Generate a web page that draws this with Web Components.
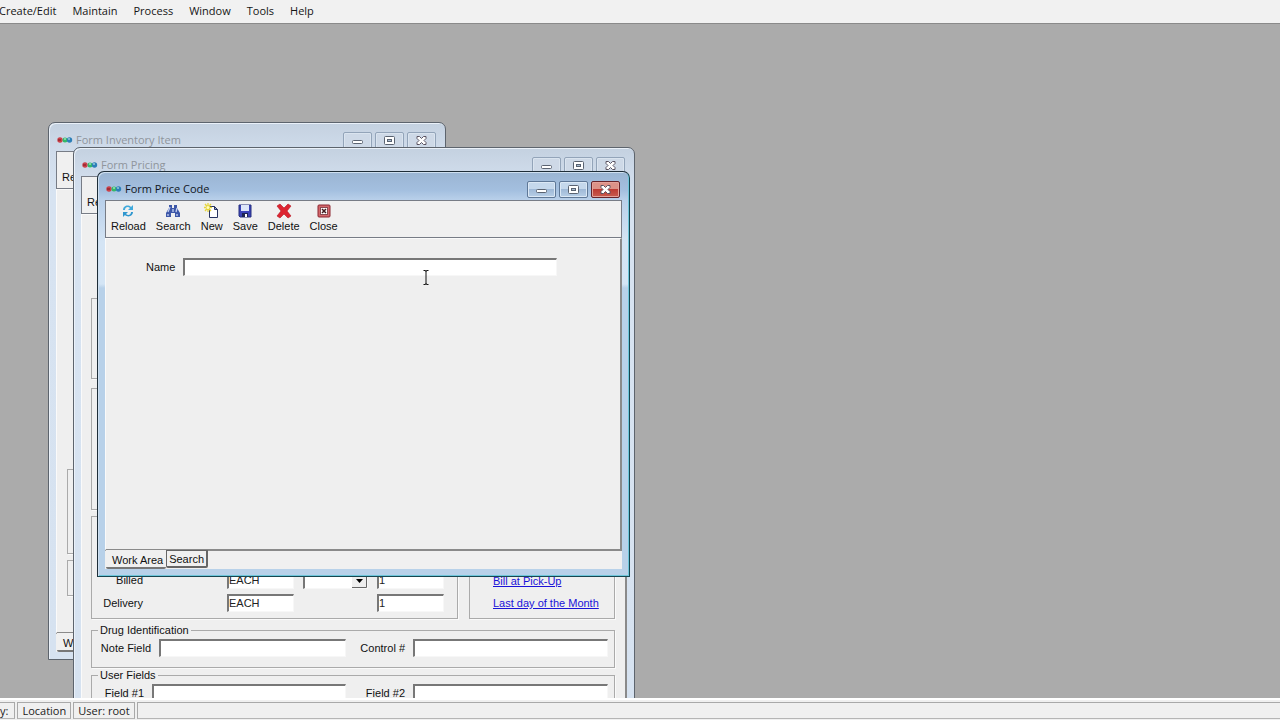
<!DOCTYPE html>
<html lang="en">
<head>
<meta charset="utf-8">
<title>Form Price Code</title>
<style>
html,body{margin:0;height:100%}
body{font:11px/14px "Liberation Sans",Arial,sans-serif;color:#111;overflow:hidden}
</style>
</head>
<body>
<app-shell></app-shell>

<script>
function define(name, html, setup) {
  const t = document.createElement('template');
  t.innerHTML = html;
  customElements.define(name, class extends HTMLElement {
    constructor() {
      super();
      this.attachShadow({mode: 'open'}).append(t.content.cloneNode(true));
    }
    connectedCallback() { if (setup) setup(this, this.shadowRoot); }
  });
}

const icons = {
  reload: '<path d="M3 7C3 3 8 1 11 4l2-2v5H8l2-2C8 3 5 4 5 7z" fill="#3fa9dc"/><path d="M13 9c0 4-5 6-8 3l-2 2V9h5l-2 2c2 2 5 1 5-2z" fill="#2f97cf"/>',
  search: '<path d="M4 2h3v3h2V2h3v3l3 5v4h-5v-4H6v4H1v-4l3-5z" fill="#3d57a8"/><path d="M3 9l2-5M11 9l1-4M3 11v2M12 11v2M8 6v3" stroke="#c3d0f2" stroke-width="1.3"/>',
  new: '<path d="M5.500 3.500h5l3 3v8h-8z" fill="#fff" stroke="#27335f"/><path d="M10.500 3.500v3h3z" fill="#8fa6de" stroke="#27335f"/><path d="M4 0v9M0 4.500h8M1 1l6 7M7 1L1 8" stroke="#e6d63a" stroke-width="1.300"/><circle cx="4" cy="4.500" r="1.500" fill="#fffcc0"/>',
  save: '<path d="M2 2h12v12H3l-1-1z" fill="#3b43b8" stroke="#26307f"/><path d="M4 2h8v6H4z" fill="#dfe7fa"/><path d="M5 10h6v4H5z" fill="#1d2452"/><path d="M8 11h2v3H8z" fill="#fff"/>',
  delete: '<path d="M1 3l3-2 4 4 4-4 3 2-4 5 4 5-3 2-4-4-4 4-3-2 4-5z" fill="#dd2430" stroke="#b51521" stroke-width=".6"/>',
  close: '<rect x="2" y="2" width="12" height="12" rx="1" fill="#d4686c" stroke="#8c2630"/><rect x="4.500" y="4.500" width="7" height="7" fill="#fff" stroke="#8a4a50"/><path d="M6 6l4 4M10 6l-4 4" stroke="#40191c" stroke-width="1.500"/>'
};

define('tool-button', `<style>
:host{display:block}
button{display:flex;flex-direction:column;align-items:center;border:0;background:none;padding:0 4px;margin:0;font:inherit;color:#111}
svg{width:16px;height:16px;display:block}
span{line-height:14px}
</style><button type="button"><svg viewBox="0 0 16 16" fill="none"></svg><span><slot></slot></span></button>`,
(el, r) => { r.querySelector('svg').innerHTML = icons[el.getAttribute('icon')]; });

define('menu-bar', `<style>
:host{display:block;background:#f1f1f1;border-bottom:1px solid #8a8a8a;height:23px;box-sizing:content-box}
nav{display:flex;gap:16px;margin-left:-1px;height:22px;align-items:center;font:11px/16px "Open Sans","Noto Sans",sans-serif}
button{font:inherit;border:0;background:none;padding:0;color:#151515}
</style><nav aria-label="Main menu"><button>Create/Edit</button><button>Maintain</button><button>Process</button><button>Window</button><button>Tools</button><button>Help</button></nav>`);

define('status-bar', `<style>
:host{display:flex;height:22px;box-sizing:border-box;padding:2px 0 1px;gap:2px;background:#f0f0f0;border-top:2px solid #fff;font:11px/15px "Open Sans","Noto Sans",sans-serif;color:#222}
div{border:1px solid #a9a9a9;border-bottom-color:#b5b5b5;padding:0 4px;white-space:nowrap;box-sizing:border-box;height:17px}
div:first-of-type{border-left:0;padding:0 6px 0 0}
div:last-of-type{flex:1;border-right:0}
</style><div>y:</div><div>Location</div><div>User: root</div><div></div>`);

define('text-field', `<style>
:host{display:flex;align-items:center;justify-content:flex-end}
label{white-space:nowrap;margin-right:8px}
input{font:inherit;width:var(--w,187px);height:18px;box-sizing:border-box;margin:0;padding:0 0 2px;border:1px solid #f7f7f7;border-top:2px solid #777;border-left:2px solid #777;border-radius:0;background:#fff;color:#222;outline:0}
</style><label for="f"></label><input id="f" type="text">`,
(el, r) => {
  const l = r.querySelector('label'), i = r.querySelector('input');
  const name = el.getAttribute('label') || '';
  if (name) l.textContent = name; else { l.remove(); i.setAttribute('aria-label', el.getAttribute('hint')); }
  i.value = el.getAttribute('value') || '';
});

define('drop-down', `<style>
:host{display:block;position:relative}
select{appearance:none;display:block;width:65px;height:18px;margin:0;padding:0;border:1px solid #f7f7f7;border-top:2px solid #777;border-left:2px solid #777;border-radius:0;background:#fff;font:inherit}
svg{position:absolute;right:1px;top:2px;width:15px;height:15px;pointer-events:none}
</style><select aria-label="Unit"><option></option></select><svg viewBox="0 0 15 15"><path d="M0 0h15v15H0z" fill="#eee"/><path d="M0 14.500h14.500V0" fill="none" stroke="#666"/><path d="M4 6h7l-3.500 4z" fill="#000"/></svg>`);

define('group-box', `<style>
:host{display:block}
fieldset{box-sizing:border-box;height:100%;min-width:0;margin:0;padding:0;border:1px solid #aaa;box-shadow:1px 1px 0 #fafafa}
legend{margin-left:6px;padding:0 2px;line-height:14px}
</style><fieldset><legend></legend><slot></slot></fieldset>`,
(el, r) => {
  const l = r.querySelector('legend');
  if (el.hasAttribute('label')) l.textContent = el.getAttribute('label'); else l.remove();
});

define('mdi-window', `<style>
:host{position:absolute;display:flex;flex-direction:column;box-sizing:border-box;border:1px solid #5d646d;border-radius:7px 7px 0 0;padding:0 7px 7px;
 background:linear-gradient(#c4d1e0,#d0dceb 28px,#d7e3f1 70px,#d6e2f0);box-shadow:inset 1px 1px 0 #eaf1f9}
:host([active]){border-color:#1e2d38;border-right-color:#174550;border-bottom-color:#174550;background:linear-gradient(#9ab5d3,#a3bfdf 18px,#b9d0ea 28px,#d4e4f4 70px,#d4e5f5 112px,#b8d1e9 116px,#b8d1e9);
 box-shadow:inset 1px 1px 0 #cfe0f0,inset -1px -1px 0 #6ec6da}
header{flex:none;display:flex;align-items:center;height:28px;padding:6px 0 0 1px;box-sizing:border-box;font:11px/16px "Open Sans","Noto Sans",sans-serif;color:#8f959c}
:host([active]) header{color:#10151c}
.logo{width:16px;height:8px;margin-right:3px}
h2{font:inherit;margin:0;flex:1;white-space:nowrap}
.ctl{display:flex;gap:3px;padding-right:2px}
.ctl button{width:29px;height:17px;padding:0;border:1px solid #93a4b9;border-radius:2px;background:#ced9e7;box-shadow:inset 0 0 0 1px #dae4ef;display:flex;align-items:center;justify-content:center}
:host([active]) .ctl button{border-color:#5f7897;background:linear-gradient(#c5d8ec 45%,#9fb9d7 50%,#b8cfe7);box-shadow:inset 0 0 0 1px #dbe8f5}
:host([active]) .ctl button:last-child{border-color:#66232a;background:linear-gradient(#dc9288 45%,#bd3b33 50%,#c85c50);box-shadow:inset 0 0 0 1px #e4a29a}
.ctl svg{width:13px;height:11px}
.tools{flex:none;display:flex;gap:2px;height:38px;box-sizing:border-box;border:1px solid #777c86;background:#f0f0f0;padding:2px 0 0 1px}
main{flex:1;min-height:0;box-sizing:border-box;background:#efefef;border:1px solid #fafafa;border-right:2px solid #8a8a8a;border-bottom:2px solid #8a8a8a}
footer{flex:none;display:flex;align-items:flex-start;height:18px;background:#f0f0f0;padding-left:1px}
footer button{font:inherit;line-height:14px;color:#111;background:#f0f0f0;margin:-1px 0 0;border:0;box-sizing:border-box;white-space:nowrap;border-radius:0 0 2px 2px}
footer .on{height:19px;padding:3px 3px 0 6px;border-bottom:2px solid #777}
footer .off{height:18px;padding:1px 2px;border:1px solid #666;border-right-width:2px;border-bottom-width:2px}
</style>
<header><svg class="logo" viewBox="0 0 16 8"><circle cx="3" cy="4" r="2.700" fill="#cb4149"/><circle cx="8" cy="4" r="2.500" fill="#35b968"/><circle cx="12.500" cy="4" r="2.700" fill="#2c7fb8"/><path d="M7 3h2M12 2v2" stroke="#c9f3e6"/><path d="M1 4h3" stroke="#7d1a25"/></svg><h2></h2>
<div class="ctl">
<button aria-label="Minimize"><svg viewBox="0 0 13 11"><rect x="1.500" y="5.500" width="10" height="3" rx="1" fill="#fff" stroke="#5a6371"/></svg></button>
<button aria-label="Maximize"><svg viewBox="0 0 13 11"><rect x="1.500" y="1.500" width="10" height="8" rx="1" fill="#fff" stroke="#5a6371"/><rect x="4.500" y="4.500" width="4" height="2" fill="#a9bdd3" stroke="#5a6371"/></svg></button>
<button aria-label="Close window"><svg viewBox="0 0 13 11"><path d="M2 1.500h2.500l2 2 2-2H11v2l-2 2 2 2v2H8.500l-2-2-2 2H2v-2l2-2-2-2z" fill="#fff" stroke="#5a5361"/></svg></button>
</div></header>
<div class="tools"><slot name="tools"></slot></div>
<main><slot></slot></main>
<footer><button class="on">Work Area</button></footer>`,
(el, r) => {
  r.querySelector('h2').textContent = el.getAttribute('heading');
  if (el.hasAttribute('active')) {
    const b = document.createElement('button');
    b.className = 'off';
    b.textContent = 'Search';
    r.querySelector('footer').append(b);
  }
});

define('pricing-form', `<style>
:host{display:block;padding:83px 10px 0 9px}
.top{display:grid;grid-template-columns:367px 1fr;column-gap:11px}
.a{height:81px;margin-bottom:9px}
.b{height:122px;margin-bottom:6px}
.c,.d{height:103px}
.units{display:grid;grid-template-columns:41px 142px 65px 67px;column-gap:9px;padding:54px 0 0 10px;row-gap:5px;align-items:center}
.units span{text-align:right}
.units text-field{--w:67px}
.links{display:flex;flex-direction:column;gap:8px;padding:57px 0 0 23px}
a{color:#1a12d8;text-decoration:underline}
.wide{margin-top:4px;height:45px}
.user{margin-top:0}
.row{display:grid;grid-template-columns:254px 1fr;padding:2px 6px 0 0}
.row text-field:first-child{--w:187px}
.user text-field:first-child{--w:194px}
.row text-field:last-child{--w:195px}
</style>
<div class="top"><group-box class="a"></group-box><i></i><group-box class="b"></group-box><i></i>
<group-box class="c"><div class="units">
<span>Billed</span><text-field hint="Billed unit" value="EACH"></text-field><drop-down></drop-down><text-field hint="Billed quantity" value="1"></text-field>
<span>Delivery</span><text-field hint="Delivery unit" value="EACH"></text-field><span></span><text-field hint="Delivery quantity" value="1"></text-field>
</div></group-box>
<group-box class="d"><div class="links"><a href="#pickup">Bill at Pick-Up</a><a href="#month">Last day of the Month</a></div></group-box></div>
<group-box class="wide" label="Drug Identification"><div class="row"><text-field label="Note Field"></text-field><text-field label="Control #"></text-field></div></group-box>
<group-box class="wide user" label="User Fields"><div class="row"><text-field label="Field #1"></text-field><text-field label="Field #2"></text-field></div></group-box>`);

define('inventory-form', `<style>
:host{display:block;padding:279px 10px 0}
.a{height:85px;margin-bottom:6px}.b{height:36px}
</style><group-box class="a"></group-box><group-box class="b"></group-box>`);

define('app-shell', `<style>
:host{display:flex;flex-direction:column;height:100vh}
.desk{flex:1;min-height:0;position:relative;overflow:hidden;background:#ababab}
.w1{left:48px;top:98px;width:398px;height:538px}
.w2{left:73px;top:123px;width:562px;height:600px}
.w3{left:97px;top:147px;width:533px;height:406px}
.name{display:flex;padding:19px 0 0 40px}
.name text-field{--w:374px}
.caret{position:absolute;left:422px;top:246px;width:8px;height:15px}
</style>
<menu-bar></menu-bar>
<div class="desk">
<mdi-window class="w1" heading="Form Inventory Item"><tool-button slot="tools" icon="reload">Reload</tool-button><inventory-form></inventory-form></mdi-window>
<mdi-window class="w2" heading="Form Pricing"><tool-button slot="tools" icon="reload">Reload</tool-button><pricing-form></pricing-form></mdi-window>
<mdi-window class="w3" heading="Form Price Code" active>
<tool-button slot="tools" icon="reload">Reload</tool-button><tool-button slot="tools" icon="search">Search</tool-button><tool-button slot="tools" icon="new">New</tool-button><tool-button slot="tools" icon="save">Save</tool-button><tool-button slot="tools" icon="delete">Delete</tool-button><tool-button slot="tools" icon="close">Close</tool-button>
<div class="name"><text-field label="Name"></text-field></div></mdi-window>
<svg class="caret" viewBox="0 0 8 15"><path d="M1.500 .5h2l.5 1 .5-1h2M4 1v13M1.500 14.500h2l.5-1 .5 1h2" fill="none" stroke="#111"/></svg>
</div>
<status-bar></status-bar>`);
</script>
</body>
</html>
